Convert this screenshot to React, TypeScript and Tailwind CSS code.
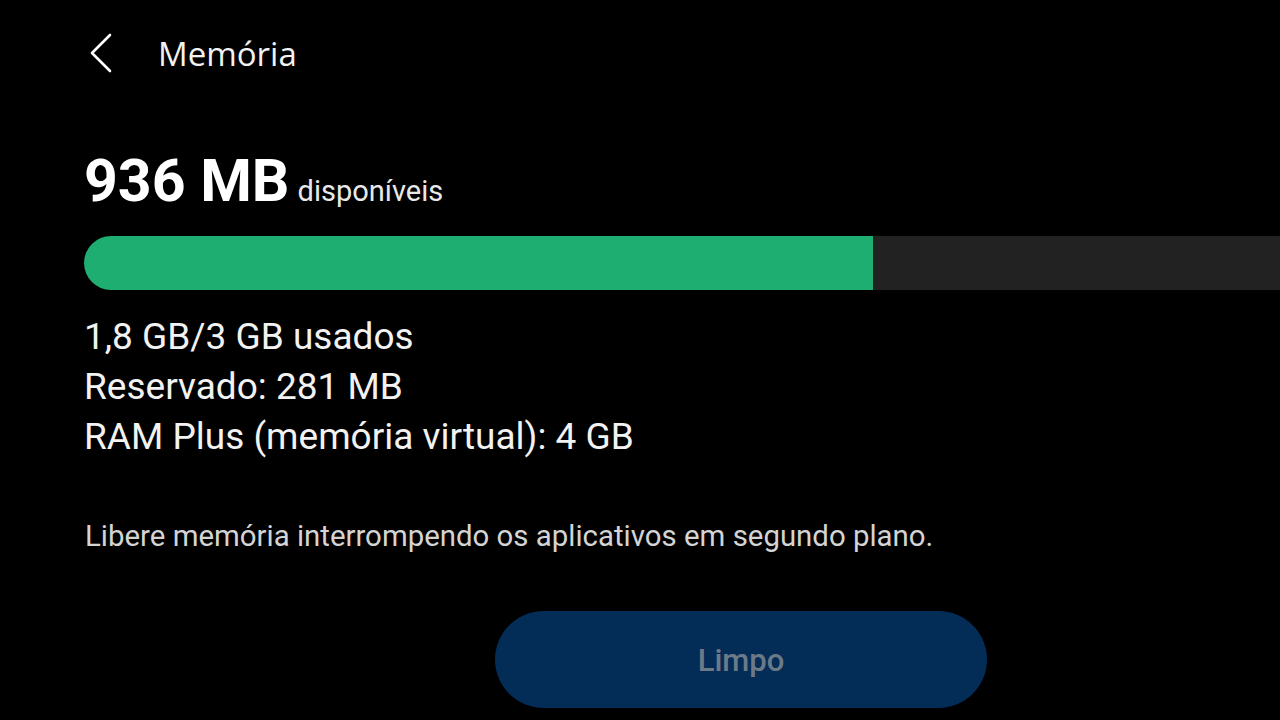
import React from "react";

export default function App() {
  const font = { fontFamily: "Roboto, 'Noto Sans', sans-serif" };
  return (
    <div className="w-[1280px] h-[720px] bg-black overflow-hidden text-white" style={font}>
      <div className="flex items-center h-[106px] pl-[86px]">
        <svg width="30" height="42" viewBox="0 0 30 42">
          <path d="M24 3 L6 21 L24 39" fill="none" stroke="#ffffff" strokeWidth="2.6" strokeLinecap="round" strokeLinejoin="round" />
        </svg>
        <div className="ml-[42px] text-[33px] leading-none text-[#f2f2f2] font-['Open_Sans',Roboto,sans-serif]">Memória</div>
      </div>
      <div className="pl-[84px] pt-[40px] flex items-end h-[104px]">
        <span className="text-[59px] font-bold leading-none">936 MB</span>
        <span className="ml-[8px] text-[29px] leading-none mb-[4px] text-[#e8e8e8]">disponíveis</span>
      </div>
      <div className="ml-[84px] mt-[26px] h-[54px] flex">
        <div className="w-[789px] h-full bg-[#1fae71] rounded-l-[27px]" />
        <div className="flex-1 h-full bg-[#222222]" />
      </div>
      <div className="pl-[84px] pt-[22px] flex flex-col text-[37px] leading-[50px] text-[#f2f2f2]">
        <div>1,8 GB/3 GB usados</div>
        <div>Reservado: 281 MB</div>
        <div>RAM Plus (memória virtual): 4 GB</div>
      </div>
      <div className="pl-[85px] mt-[54px] text-[29.4px] leading-[40px] text-[#d4d4d4]">
        Libere memória interrompendo os aplicativos em segundo plano.
      </div>
      <div className="mt-[55px] flex justify-center pl-[202px]">
        <div className="w-[492px] h-[97px] rounded-full bg-[#032c57] flex items-center justify-center">
          <span className="text-[31px] font-medium text-[#6c7a88] mt-[3px]">Limpo</span>
        </div>
      </div>
    </div>
  );
}
